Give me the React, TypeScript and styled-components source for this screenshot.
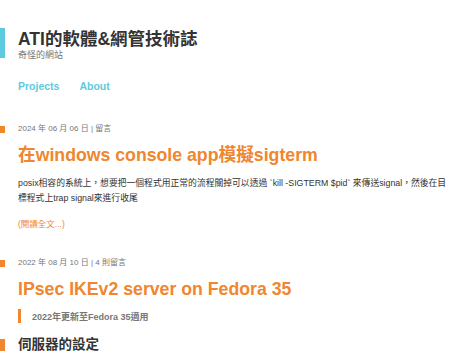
import React from "react";
import styled, { createGlobalStyle } from "styled-components";

const Global = createGlobalStyle`
  html, body { margin: 0; padding: 0; background: #fff; }
  body {
    font-family: "Liberation Sans", "Noto Sans CJK TC", sans-serif;
    color: #333;
  }
`;

const ORANGE = "#f0862d";
const CYAN = "#5ccbe0";

const Page = styled.div`
  padding: 28px 22px 0 0;
`;

const Header = styled.header`
  display: flex;
  gap: 13px;
`;

const Bar = styled.div<{ $color: string; $h: number; $w?: number }>`
  width: ${(p) => p.$w ?? 5}px;
  height: ${(p) => p.$h}px;
  background: ${(p) => p.$color};
  flex: none;
`;

const HeaderText = styled.div`
  display: flex;
  flex-direction: column;
`;

const SiteTitle = styled.h1`
  margin: 0;
  font-size: 17.5px;
  line-height: 22px;
  font-weight: bold;
  color: #333;
`;

const SiteSub = styled.div`
  font-size: 9px;
  line-height: 11px;
  color: #777;
`;

const Nav = styled.nav`
  display: flex;
  gap: 20px;
  padding-left: 18px;
  margin-top: 19px;
`;

const NavLink = styled.a`
  color: ${CYAN};
  font-weight: bold;
  font-size: 10.5px;
  line-height: 12px;
  text-decoration: none;
`;

const Post = styled.article<{ $top: number }>`
  margin-top: ${(p) => p.$top}px;
`;

const MetaRow = styled.div`
  display: flex;
  align-items: center;
  gap: 13px;
`;

const Meta = styled.div`
  font-size: 8px;
  line-height: 10px;
  color: #777;
`;

const PostTitle = styled.h2`
  margin: 10px 0 0 18px;
  font-size: 17.7px;
  line-height: 22px;
  font-weight: bold;
  color: ${ORANGE};
`;

const Body = styled.p`
  margin: 10px 0 0 18px;
  font-size: 8.8px;
  line-height: 15px;
  color: #333;
`;

const More = styled.a`
  display: block;
  margin: 13px 0 0 18px;
  font-size: 8.5px;
  line-height: 11px;
  color: ${ORANGE};
  text-decoration: none;
`;

const Quote = styled.blockquote`
  margin: 9px 0 0 18px;
  display: flex;
  align-items: center;
  gap: 11px;
`;

const QuoteText = styled.span`
  font-size: 9px;
  font-weight: bold;
  color: #777;
`;

const Heading = styled.div`
  display: flex;
  align-items: center;
  gap: 13px;
  margin-top: 12px;
`;

const HeadingText = styled.h3`
  margin: 0;
  font-size: 13.5px;
  line-height: 20px;
  font-weight: bold;
  color: #333;
`;

export default function App() {
  return (
    <>
      <Global />
      <Page>
        <Header>
          <Bar $color={CYAN} $h={30} />
          <HeaderText>
            <SiteTitle>ATI的軟體&amp;網管技術誌</SiteTitle>
            <SiteSub>奇怪的網站</SiteSub>
          </HeaderText>
        </Header>
        <Nav>
          <NavLink href="#">Projects</NavLink>
          <NavLink href="#">About</NavLink>
        </Nav>
        <Post $top={32}>
          <MetaRow>
            <Bar $color={ORANGE} $h={7} />
            <Meta>2024 年 06 月 06 日 | 留言</Meta>
          </MetaRow>
          <PostTitle>在windows console app模擬sigterm</PostTitle>
          <Body>
            posix相容的系統上，想要把一個程式用正常的流程關掉可以透過 `kill -SIGTERM $pid` 來傳送signal，然後在目標程式上trap signal來進行收尾
          </Body>
          <More href="#">(閱讀全文...)</More>
        </Post>
        <Post $top={28}>
          <MetaRow>
            <Bar $color={ORANGE} $h={7} />
            <Meta>2022 年 08 月 10 日 | 4 則留言</Meta>
          </MetaRow>
          <PostTitle>IPsec IKEv2 server on Fedora 35</PostTitle>
          <Quote>
            <Bar $color={ORANGE} $h={14} $w={3} />
            <QuoteText>2022年更新至Fedora 35適用</QuoteText>
          </Quote>
          <Heading>
            <Bar $color={ORANGE} $h={12} />
            <HeadingText>伺服器的設定</HeadingText>
          </Heading>
        </Post>
      </Page>
    </>
  );
}
